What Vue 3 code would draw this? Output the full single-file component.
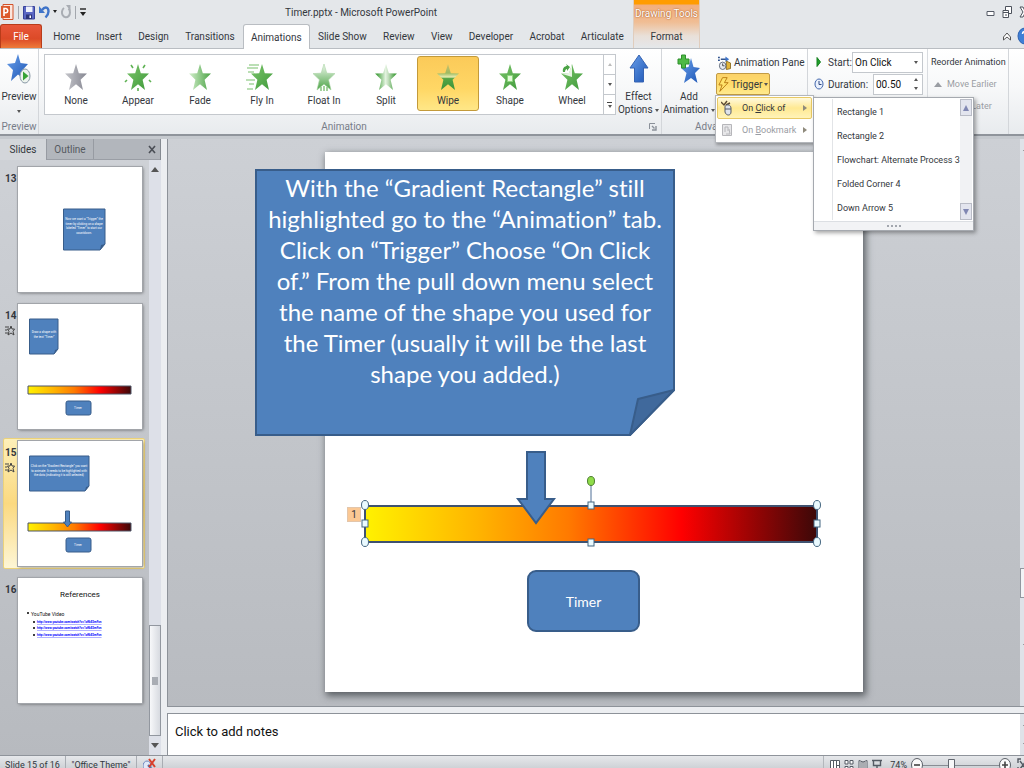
<script setup>
import { ref } from "vue";

const tabs = [
  "Home",
  "Insert",
  "Design",
  "Transitions",
  "Animations",
  "Slide Show",
  "Review",
  "View",
  "Developer",
  "Acrobat",
  "Articulate",
];
const activeTab = ref("Animations");

const effects = [
  { name: "None", fill: "url(#star-grey)" },
  { name: "Appear", fill: "url(#star-green)" },
  { name: "Fade", fill: "url(#star-fade)" },
  { name: "Fly In", fill: "url(#star-green)" },
  { name: "Float In", fill: "url(#star-float)" },
  { name: "Split", fill: "url(#star-split)" },
  { name: "Wipe", fill: "url(#star-wipe)" },
  { name: "Shape", fill: "url(#star-green)" },
  { name: "Wheel", fill: "url(#star-green)" },
];
const effect = ref("Wipe");

const shapes = [
  "Rectangle 1",
  "Rectangle 2",
  "Flowchart: Alternate Process 3",
  "Folded Corner 4",
  "Down Arrow 5",
];

const slides = [
  { number: 13, animated: false },
  { number: 14, animated: true },
  { number: 15, animated: true },
  { number: 16, animated: false },
];
const current = ref(15);

const start = ref("On Click");
const duration = ref("00.50");
const notes = ref("Click to add notes");
const zoom = ref(74);

const star =
  "M12 1 14.8 10.2 23 10.6 16.6 16.8 19 27 12 21.2 5 27 7.4 16.8 1 10.6 9.2 10.2Z";
</script>

<template>
  <div class="app">
    <!-- shared gradients -->
    <svg class="defs" aria-hidden="true">
      <defs>
        <linearGradient id="star-grey">
          <stop offset="0" stop-color="#c4c5ca" />
          <stop offset="1" stop-color="#868792" />
        </linearGradient>
        <linearGradient id="star-green" x2="1" y2="1">
          <stop offset="0" stop-color="#7cc56c" />
          <stop offset="1" stop-color="#3f9a3a" />
        </linearGradient>
        <linearGradient id="star-fade">
          <stop offset="0" stop-color="#d3efcc" />
          <stop offset="1" stop-color="#4ba345" />
        </linearGradient>
        <linearGradient id="star-float" x2="0" y2="1">
          <stop offset="0" stop-color="#f0f9ee" />
          <stop offset="1" stop-color="#4ba345" />
        </linearGradient>
        <linearGradient id="star-split">
          <stop offset="0.1" stop-color="#4ba345" />
          <stop offset="0.48" stop-color="#e3f3df" />
          <stop offset="0.6" stop-color="#c4dfbf" />
          <stop offset="0.9" stop-color="#4ba345" />
        </linearGradient>
        <linearGradient id="star-wipe" x2="0" y2="1">
          <stop offset="0" stop-color="#d2c069" />
          <stop offset="0.35" stop-color="#9cba62" />
          <stop offset="0.5" stop-color="#e6ecae" />
          <stop offset="0.56" stop-color="#55a545" />
          <stop offset="1" stop-color="#3a9338" />
        </linearGradient>
        <linearGradient id="blue-fill" x2="1" y2="1">
          <stop offset="0" stop-color="#6ba0ea" />
          <stop offset="1" stop-color="#1c55b5" />
        </linearGradient>
        <linearGradient id="heat">
          <stop offset="0" stop-color="#fff200" />
          <stop offset="0.25" stop-color="#ffb400" />
          <stop offset="0.45" stop-color="#ff7a00" />
          <stop offset="0.7" stop-color="#ff0000" />
          <stop offset="1" stop-color="#3c0808" />
        </linearGradient>
      </defs>
    </svg>

    <header class="titlebar">
      <div class="quick">
        <svg width="13" height="18" viewBox="0 0 13 18">
          <path d="M2 1.500H12V16.500H2Z" fill="#fbe5dc" stroke="#d2522a" />
          <path d="M0 3H9V15H0Z" fill="#dc5a2d" />
          <path d="M3 13V5.500H5A2.200 2.200 0 0 1 5 9.800H3" fill="none" stroke="#fff" stroke-width="1.600" />
        </svg>
        <i class="bar"></i>
        <button aria-label="Save">
          <svg width="12" height="15" viewBox="0 0 12 15">
            <path d="M.5 1.500H11.500V14H.5Z" fill="#5a67c4" stroke="#38429a" />
            <path d="M3 1.500H9.500V7H3Z" fill="#eef1fb" />
            <path d="M3 9.500H9V14H3Z" fill="#2c3478" />
            <path d="M6.500 10.500H8V13H6.500Z" fill="#fff" />
          </svg>
        </button>
        <button aria-label="Undo">
          <svg width="18" height="14" viewBox="0 0 18 14">
            <path d="M3 5C6 1 9.500 2 9.500 6.500 9.500 9 8 11 6.500 12.500" fill="none" stroke="#3f74c9" stroke-width="2.400" />
            <path d="M0 1V8H6Z" fill="#3f74c9" />
            <path d="M14 5H18L16 8Z" fill="#222" />
          </svg>
        </button>
        <button aria-label="Repeat">
          <svg width="10" height="14" viewBox="0 0 10 14">
            <path d="M3 3A4 5 0 1 0 7.500 3.500" fill="none" stroke="#a9adb3" stroke-width="2" />
            <path d="M5 0H9.500V6Z" fill="#a9adb3" />
          </svg>
        </button>
        <i class="bar"></i>
        <button aria-label="Customize">
          <svg width="6" height="8" viewBox="0 0 6 8">
            <path d="M0 1H6" stroke="#222" stroke-width="1.400" />
            <path d="M0 4H6L3 8Z" fill="#222" />
          </svg>
        </button>
      </div>
      <h1>Timer.pptx - Microsoft PowerPoint</h1>
      <div class="window-buttons">
        <button aria-label="Minimize">
          <svg width="9" height="14" viewBox="0 0 9 14"><path d="M1 6.500H8V10.500H1Z" fill="#fff" stroke="#555b66" /></svg>
        </button>
        <button aria-label="Restore">
          <svg width="10" height="14" viewBox="0 0 10 14">
            <path d="M3.500 1.500H9.500V8.500H3.500Z" fill="#fff" stroke="#4c525c" />
            <path d="M1 5.500H6.500V12.500H1Z" fill="#fff" stroke="#4c525c" />
            <path d="M1 7.500H6.500M3 10H5" stroke="#4c525c" />
          </svg>
        </button>
        <button aria-label="Close">
          <svg width="10" height="14" viewBox="0 0 10 14">
            <path d="M1 2H4L5.500 5 7 2H10L7 7 10 12H7L5.500 9 4 12H1L4 7Z" fill="#fff" stroke="#4c525c" />
          </svg>
        </button>
      </div>
    </header>

    <nav class="tabs">
      <button class="file">File</button>
      <div class="tab-list">
        <button
          v-for="tab in tabs"
          :key="tab"
          class="tab"
          :class="{ active: tab === activeTab }"
          @click="activeTab = tab"
        >
          {{ tab }}
        </button>
      </div>
      <div class="context">
        <span>Drawing Tools</span>
        <button>Format</button>
      </div>
      <div class="help">
        <svg width="8" height="9" viewBox="0 0 8 9"><path d="M.5 8V5L4 1 7.500 5V8L4 5Z" fill="#fff" stroke="#555" /></svg>
        <svg width="16" height="18" viewBox="0 0 16 18">
          <ellipse cx="8" cy="9" rx="7" ry="8" fill="#3f7fd6" stroke="#2f62b0" />
          <path d="M5.500 7C5.500 3.500 10.500 3.500 10.500 6.500 10.500 8.500 8 8.500 8 11M8 12.500V14" fill="none" stroke="#fff" stroke-width="1.600" />
        </svg>
      </div>
    </nav>

    <section class="ribbon">
      <div class="group preview">
        <div class="content">
          <button class="big">
            <svg width="24" height="30" viewBox="0 0 24 30">
              <path d="M11 0 13.500 9 21 10 15.500 16 18 26 11 20.500 4 27 6 16 0 10 8 9Z" fill="url(#blue-fill)" />
              <ellipse cx="18" cy="22" rx="5" ry="7" fill="#eef3ee" stroke="#8798a5" />
              <path d="M16 17.500V26.500L21.500 22Z" fill="#37a336" />
            </svg>
            <span>Preview</span>
            <i class="caret"></i>
          </button>
        </div>
        <footer>Preview</footer>
      </div>

      <div class="group animation">
        <div class="content">
          <div class="gallery">
            <button
              v-for="item in effects"
              :key="item.name"
              class="effect"
              :class="{ selected: item.name === effect }"
              @click="effect = item.name"
            >
              <svg width="32" height="28" viewBox="-4 0 32 28">
                <path :d="star" :fill="item.fill" />
                <g v-if="item.name === 'Appear'" stroke="#5fb254" stroke-width="1.600">
                  <path d="M5 2 7 5M19 2 17 5M1 17-1 19M23 17 25 19M12 25V28" />
                </g>
                <g v-if="item.name === 'Fly In'" stroke="#79bf6d" stroke-width="1.200">
                  <path d="M-1 2H9M-3 5H8M-2 9H4M-4 17H5M-1 21H4M-3 26H3" />
                </g>
                <path v-if="item.name === 'Float In'" :d="star" fill="none" stroke="#a8d3a2" stroke-width=".6" />
                <path v-if="item.name === 'Float In'" d="M9 24V28M12 23V28M15 24V28" stroke="#86c47d" stroke-width="1.500" />
                <path v-if="item.name === 'Shape'" d="M9.500 12.500H14.500V18.500H9.500Z" fill="#e2fbd9" stroke="#8fd67f" />
                <g v-if="item.name === 'Wheel'">
                  <path d="M12 1V14L1 10.500 9 10Z" fill="#e7f5e3" />
                  <path d="M3 9C2 5 5 3 7 3L6 1 10 4 7 8V6C6 6 5 7 5 9Z" fill="#4ba345" />
                </g>
              </svg>
              <span>{{ item.name }}</span>
            </button>
            <div class="gallery-scroll">
              <button disabled aria-label="Row up"><i class="caret up"></i></button>
              <button aria-label="Row down"><i class="caret"></i></button>
              <button aria-label="More"><i class="more"></i><i class="caret"></i></button>
            </div>
          </div>
          <button class="big options">
            <svg width="20" height="30" viewBox="0 0 20 30">
              <path d="M10 1 19 14H14.500V28H5.500V14H1Z" fill="url(#blue-fill)" stroke="#3563b2" />
            </svg>
            <span>Effect<br />Options <i class="caret"></i></span>
          </button>
        </div>
        <footer>
          Animation
          <svg class="launcher" width="8" height="8" viewBox="0 0 8 8">
            <path d="M.5 6V.5H6" fill="none" stroke="#8a9099" />
            <path d="M3 3 5.500 5.500M7 3V7H3" fill="none" stroke="#8a9099" stroke-width="1.400" />
          </svg>
        </footer>
      </div>

      <div class="group advanced">
        <div class="content">
          <button class="big">
            <svg width="24" height="30" viewBox="0 0 24 30">
              <path d="M14 4 16.500 13 23 14 18 19 20.500 29 14 24 7 29 9.500 19 4 14 11.500 13Z" fill="url(#blue-fill)" />
              <path d="M4.500 1H8.500V5H12V10H8.500V14H4.500V10H1V5H4.500Z" fill="#4fba45" stroke="#2f8f2d" />
            </svg>
            <span>Add<br />Animation <i class="caret"></i></span>
          </button>
          <div class="stack">
            <button class="small">
              <svg width="13" height="16" viewBox="0 0 14 16">
                <path d="M0 2H2M0 5H2M3 4H9" stroke="#33558f" stroke-width="1.500" />
                <path d="M8 1 12 4 8 7Z" fill="#3d73c8" />
                <path d="M9 6 13.500 8V14L9 15Z" fill="#e3b53a" stroke="#8d6d20" />
                <ellipse cx="5" cy="11" rx="3.500" ry="4" fill="#e7eaf1" stroke="#60697a" />
                <path d="M5 8.500V11H7" fill="none" stroke="#444" />
              </svg>
              Animation Pane
            </button>
            <div class="trigger">
              <button class="small on">
                <svg width="11" height="17" viewBox="0 0 12 17">
                  <path d="M5 1H10L7 6.500H11L2 16 4.500 9H1Z" fill="#ffe36b" stroke="#b87a12" />
                </svg>
                Trigger <i class="caret"></i>
              </button>
              <div class="menu">
                <button class="menu-row hot">
                  <svg width="12" height="16" viewBox="0 0 12 16">
                    <path d="M0 2 3 5 6 1M5 5 9 3" fill="none" stroke="#5c4a33" stroke-width="1.400" />
                    <path d="M4 7C4 4 10 4 10 8V12C10 16 5 16 4 12Z" fill="#dfe3ea" stroke="#545a66" />
                    <path d="M4 9H10" stroke="#545a66" />
                  </svg>
                  <span>On <u>C</u>lick of</span>
                  <i class="side"></i>
                </button>
                <button class="menu-row" disabled>
                  <svg width="12" height="14" viewBox="0 0 12 14">
                    <path d="M1.500 1.500H10.500V12.500H1.500Z" fill="#e7e7e9" stroke="#b6b6ba" />
                    <path d="M4 9V4H7V8M5 11H9M8 6 9 11" fill="none" stroke="#b6b6ba" />
                  </svg>
                  <span>On <u>B</u>ookmark</span>
                  <i class="side"></i>
                </button>
                <div class="submenu">
                  <div class="submenu-body">
                    <div class="shape-list">
                      <button v-for="shape in shapes" :key="shape">{{ shape }}</button>
                    </div>
                    <div class="menu-scroll">
                      <button aria-label="Scroll up"><i class="caret up"></i></button>
                      <button aria-label="Scroll down"><i class="caret"></i></button>
                    </div>
                  </div>
                  <div class="grip"><i></i><i></i><i></i><i></i></div>
                </div>
              </div>
            </div>
          </div>
        </div>
        <footer>Advanced</footer>
      </div>

      <div class="group timing">
        <div class="content">
          <div class="fields">
            <svg width="10" height="12" viewBox="0 0 10 12"><path d="M3 1.500V10.500L6.500 6Z" fill="#1fa02b" stroke="#15801f" /></svg>
            <label for="start">Start:</label>
            <div class="field">
              <select id="start" v-model="start">
                <option>On Click</option>
                <option>With Previous</option>
                <option>After Previous</option>
              </select>
              <i class="caret"></i>
            </div>
            <svg width="10" height="12" viewBox="0 0 10 12">
              <ellipse cx="5" cy="6" rx="4" ry="5" fill="#eaf1fd" stroke="#4266ac" />
              <path d="M5 3V6.500H7.500" fill="none" stroke="#2d4780" />
            </svg>
            <label for="duration">Duration:</label>
            <div class="field spin">
              <input id="duration" v-model="duration" type="text" />
              <div><i class="caret up"></i><i class="caret"></i></div>
            </div>
          </div>
          <div class="reorder">
            <strong>Reorder Animation</strong>
            <button disabled><i class="caret up"></i>Move Earlier</button>
            <button disabled><i class="caret"></i>Move Later</button>
          </div>
        </div>
      </div>
    </section>

    <main class="body">
      <aside class="panel">
        <div class="panel-tabs">
          <button class="active">Slides</button>
          <button>Outline</button>
          <button class="close" aria-label="Close pane">
            <svg width="8" height="9" viewBox="0 0 8 9"><path d="M1 1 7 8M7 1 1 8" stroke="#4b4f56" stroke-width="1.600" /></svg>
          </button>
        </div>
        <div class="panel-body">
          <ol class="slides">
            <li
              v-for="slide in slides"
              :key="slide.number"
              :class="{ selected: slide.number === current }"
              @click="current = slide.number"
            >
              <div class="number">
                {{ slide.number }}
                <svg v-if="slide.animated" width="10" height="11" viewBox="0 0 10 11">
                  <path d="M6 1 7 4H9.500L8 6.500 9 10 6 8 3 10 4 6.500 2.500 4H5Z" fill="none" stroke="#444" />
                  <path d="M0 2H4M0 5H2M0 8H3" stroke="#444" />
                </svg>
              </div>
              <svg class="thumb" viewBox="0 0 124 125">
                <g v-if="slide.number === 13">
                  <path d="M45.500 42H87V77L82 83H45.500Z" fill="#4f81bd" stroke="#385d8a" />
                  <path d="M87 77 83 78 82 83Z" fill="#385d8a" />
                  <text class="tiny" x="66" y="53">Now we want a “Trigger” the</text>
                  <text class="tiny" x="66" y="58">timer by clicking on a shape</text>
                  <text class="tiny" x="66" y="62">labeled “Timer” to start our</text>
                  <text class="tiny" x="66" y="67">countdown.</text>
                </g>
                <g v-if="slide.number === 14">
                  <path d="M11.500 15H40V45L36 50H11.500Z" fill="#4f81bd" stroke="#385d8a" />
                  <path d="M40 45 37 46 36 50Z" fill="#385d8a" />
                  <text class="tiny" x="26" y="29">Draw a shape with</text>
                  <text class="tiny" x="26" y="34">the text “Timer”</text>
                </g>
                <g v-if="slide.number === 15">
                  <path d="M11.500 15H71V45L67 50H11.500Z" fill="#4f81bd" stroke="#385d8a" />
                  <path d="M71 45 68 46 67 50Z" fill="#385d8a" />
                  <text class="tiny" x="41" y="26">Click on the “Gradient Rectangle” you want</text>
                  <text class="tiny" x="41" y="31">to animate. It needs to be highlighted with</text>
                  <text class="tiny" x="41" y="35">the dots (indicating it is still selected)</text>
                </g>
                <g v-if="slide.animated">
                  <path d="M10 82H113V90H10Z" fill="url(#heat)" stroke="#4c5566" />
                  <rect x="48" y="97" width="25" height="14" rx="2" fill="#4f81bd" stroke="#385d8a" />
                  <text class="tiny" x="60" y="105">Timer</text>
                </g>
                <path
                  v-if="slide.number === 15"
                  d="M47.500 70H51.500V81H53.500L49.500 86 45.500 81H47.500Z"
                  fill="#4f81bd"
                  stroke="#385d8a"
                />
                <g v-if="slide.number === 16">
                  <text class="heading" x="62" y="19">References</text>
                  <circle cx="10" cy="35" r="1" />
                  <text class="item" x="13" y="38">YouTube Video</text>
                  <g v-for="y in [45, 51, 58]" :key="y">
                    <circle cx="16" :cy="y - 1" r="1" />
                    <text class="link" x="19" :y="y">http://www.youtube.com/watch?v=1zKkE3mFcn</text>
                  </g>
                </g>
              </svg>
            </li>
          </ol>
          <div class="panel-scroll">
            <i class="caret up"></i>
            <div class="handle"><i></i></div>
            <i class="caret"></i>
          </div>
        </div>
      </aside>

      <section class="work">
        <div class="stage">
          <div class="canvas">
            <article class="slide">
              <svg class="drawing" viewBox="0 0 538 540">
                <path d="M40 354H492V390H40Z" fill="url(#heat)" stroke="#3f5270" stroke-width="2" />
                <path d="M202 300H220V347H229L211 371 193 347H202Z" fill="#4f81bd" stroke="#385d8a" stroke-width="2" />
                <rect x="203" y="419" width="111" height="60" rx="8" fill="#4f81bd" stroke="#385d8a" stroke-width="2" />
                <path d="M266 333V350" stroke="#4f6f96" />
                <ellipse cx="266" cy="329" rx="3.500" ry="4.500" fill="#8fdc4a" stroke="#4f7d33" />
                <g fill="#eafaff" stroke="#456781">
                  <ellipse v-for="[x, y] in [[40, 353], [492, 353], [40, 390], [492, 390]]" :key="`${x}-${y}`" :cx="x" :cy="y" rx="3.500" ry="4.500" />
                  <rect v-for="[x, y] in [[266, 353], [266, 390], [40, 371], [492, 371]]" :key="`${x}-${y}`" :x="x - 3" :y="y - 3" width="6" height="7" />
                </g>
              </svg>
              <div class="callout">
                <svg viewBox="0 0 420 267">
                  <path d="M1 1H419V221L375 266H1Z" fill="#4f81bd" stroke="#385d8a" stroke-width="2" />
                  <path d="M419 221 383 230 375 266Z" fill="#40699c" stroke="#385d8a" stroke-width="2" stroke-linejoin="round" />
                </svg>
                <p>
                  With the “Gradient Rectangle” still<br />
                  highlighted go to the “Animation” tab.<br />
                  Click on “Trigger” Choose “On Click<br />
                  of.” From the pull down menu select<br />
                  the name of the shape you used for<br />
                  the Timer (usually it will be the last<br />
                  shape you added.)
                </p>
              </div>
              <span class="timer">Timer</span>
              <span class="order">1</span>
            </article>
          </div>
          <div class="stage-scroll">
            <i class="caret up"></i>
            <div class="handle"></div>
            <i class="caret"></i>
          </div>
        </div>
        <div class="notes">
          <textarea v-model="notes" aria-label="Notes"></textarea>
          <div class="notes-scroll"><i class="caret up"></i><i class="caret"></i></div>
        </div>
      </section>
    </main>

    <footer class="status">
      <span class="cell count">Slide 15 of 16</span>
      <span class="cell theme">"Office Theme"</span>
      <span class="cell">
        <svg width="13" height="14" viewBox="0 0 13 14">
          <ellipse cx="4" cy="8" rx="4" ry="5" fill="#dfe8f8" stroke="#6d86bd" />
          <path d="M5 7 11 14" stroke="#5570ad" stroke-width="2" />
          <path d="M6 1 12 9M12 1 6 9" stroke="#d9402c" stroke-width="2" />
        </svg>
      </span>
      <div class="views">
        <svg width="10" height="12" viewBox="0 0 10 12"><path d="M.5 1.500H9.500V11H.5ZM3.500 1V11M6 6.500H9.500M6.500 1V11" fill="#fff" stroke="#555b64" /></svg>
        <svg width="10" height="12" viewBox="0 0 10 12"><path d="M1 1.500H4V5H1ZM6 1.500H9V5H6ZM1 7.500H4V11H1ZM6 7.500H9V11H6Z" fill="#fff" stroke="#555b64" /></svg>
        <svg width="10" height="12" viewBox="0 0 10 12"><path d="M1 1.500 5 3 9 1.500V10L5 11.500 1 10ZM5 3V11.500M3 3V10M7 3V10" fill="#fff" stroke="#555b64" /></svg>
        <svg width="10" height="12" viewBox="0 0 10 12"><path d="M0 1.500H10M1.500 2V6.500H8.500V2M5 6.500V9M2 10.500H8" fill="none" stroke="#555b64" stroke-width="1.400" /></svg>
      </div>
      <label for="zoom">{{ zoom }}%</label>
      <button aria-label="Zoom out">
        <svg width="12" height="14" viewBox="0 0 12 14"><ellipse cx="6" cy="7" rx="5.500" ry="6.500" fill="#fafafa" stroke="#5b6068" /><path d="M3 7H9" stroke="#444" stroke-width="1.600" /></svg>
      </button>
      <input id="zoom" v-model="zoom" type="range" min="10" max="190" />
      <button aria-label="Zoom in">
        <svg width="12" height="14" viewBox="0 0 12 14"><ellipse cx="6" cy="7" rx="5.500" ry="6.500" fill="#fafafa" stroke="#5b6068" /><path d="M3 7H9M6 3.500V10.500" stroke="#444" stroke-width="1.600" /></svg>
      </button>
      <button class="fit" aria-label="Fit slide">
        <svg width="12" height="14" viewBox="0 0 12 14"><path d="M1 5V1H4M8 1H11V5M11 9V13H8M4 13H1V9M3 3 9 11M9 3 3 11" fill="none" stroke="#555b64" stroke-width="1.400" /></svg>
      </button>
    </footer>
  </div>
</template>

<style>
body {
  overflow: hidden;
}
</style>

<style scoped>
* {
  box-sizing: border-box;
}
.app {
  display: flex;
  flex-direction: column;
  width: calc(100vw + 12px);
  height: calc(100vh + 6px);
  font-family: Roboto, sans-serif;
  font-size: 10px;
  line-height: 13px;
  color: #33373d;
  background: #e4e7ea;
}
.defs {
  position: absolute;
  width: 0;
  height: 0;
}
svg {
  display: block;
  flex: none;
}
button {
  padding: 0;
  border: 0;
  background: none;
  font: inherit;
  color: inherit;
  white-space: nowrap;
}
button:disabled {
  color: #9a9da3;
}
.caret {
  display: inline-block;
  flex: none;
  border: 2px solid transparent;
  border-top: 3px solid #555;
  border-bottom: 0;
  vertical-align: middle;
}
.caret.up {
  border-top: 0;
  border-bottom: 3px solid #555;
}

/* title bar */
.titlebar {
  display: grid;
  grid-template-columns: 1fr auto 1fr;
  align-items: center;
  height: 24px;
  padding: 0 7px 0 1px;
  flex: none;
}
.titlebar h1 {
  margin: 0 308px 0 0;
  font-size: 10px;
  font-weight: normal;
  white-space: nowrap;
}
.quick {
  display: flex;
  align-items: center;
  gap: 4px;
}
.bar {
  width: 1px;
  height: 13px;
  background: #a3a7ad;
}
.window-buttons {
  display: flex;
  gap: 7px;
  justify-content: flex-end;
}

/* tabs */
.tabs {
  display: flex;
  height: 25px;
  flex: none;
  border-bottom: 1px solid #b9bdc2;
}
.file {
  width: 42px;
  border-radius: 3px 3px 0 0;
  border: 1px solid #b83c1a;
  border-bottom: 0;
  background: linear-gradient(#e8573a, #dc4a27 60%, #ee7b3a);
  color: #fff;
}
.tab-list {
  display: flex;
  width: 591px;
  padding: 0 1px 0 3px;
}
.tab {
  flex: auto;
  border: 1px solid transparent;
  border-bottom: 0;
}
.tab.active {
  margin-bottom: -1px;
  border-color: #b9bdc2;
  border-radius: 3px 3px 0 0;
  background: #fff;
}
.context {
  display: flex;
  flex-direction: column;
  align-items: center;
  width: 67px;
  height: 48px;
  margin-top: -24px;
  border: solid #e0cdbd;
  border-width: 0 1px;
  background: linear-gradient(#ff9c00 4px, #f2ae7c 5px, #f0bd94 22px, #e9e0d9 36px, #e4e7ea);
}
.context span {
  padding-top: 7px;
  color: #fff;
  text-shadow: 0 0 1px #b0602a, 0 0 2px #b0602a;
  white-space: nowrap;
  height: 24px;
}
.context button {
  flex: 1;
}
.help {
  display: flex;
  align-items: center;
  gap: 6px;
  margin-left: auto;
  margin-right: 3px;
}

/* ribbon */
.ribbon {
  display: flex;
  flex: none;
  height: 87px;
  border-bottom: 2px solid #8f949b;
  background: linear-gradient(#fff, #f7f8f9 45%, #e8ebee);
}
.group {
  display: flex;
  flex: none;
  flex-direction: column;
  border-right: 1px solid #d3d6da;
}
.group .content {
  display: flex;
  flex: 1;
  min-height: 0;
}
.group > footer {
  position: relative;
  height: 15px;
  line-height: 15px;
  text-align: center;
  color: #777c88;
}
.preview {
  width: 39px;
}
.animation {
  width: 623px;
}
.animation > footer {
  padding-right: 12px;
}
.advanced {
  width: 146px;
}
.advanced > footer {
  padding-left: 33px;
  text-align: left;
}
.timing {
  width: 201px;
}
.big {
  display: flex;
  flex-direction: column;
  align-items: center;
  flex: 1;
  gap: 6px;
  padding-top: 5px;
}
.big .caret {
  margin-top: 1px;
}
.big span .caret {
  margin-top: 0;
}
.gallery {
  display: flex;
  flex: none;
  width: 572px;
  height: 61px;
  margin: 5px 0 0 5px;
  border: 1px solid #c4c8cd;
  background: #fff;
}
.effect {
  display: flex;
  flex-direction: column;
  align-items: center;
  width: 62px;
  gap: 3px;
  margin: 1px 0 3px;
  padding-top: 6px;
  border: 1px solid transparent;
  border-radius: 3px;
}
.effect.selected {
  border-color: #c39a3a;
  background: linear-gradient(#fbca59, #ffd765 60%, #ffe787);
}
.gallery-scroll {
  display: flex;
  flex-direction: column;
  width: 12px;
  border-left: 1px solid #c4c8cd;
}
.gallery-scroll button {
  display: flex;
  flex-direction: column;
  align-items: center;
  justify-content: center;
  gap: 2px;
  flex: 1;
}
.gallery-scroll button + button {
  border-top: 1px solid #c4c8cd;
}
.gallery-scroll button:disabled {
  opacity: 0.4;
}
.more {
  width: 5px;
  height: 1px;
  background: #444;
}
.launcher {
  position: absolute;
  right: 4px;
  top: 4px;
}
.advanced .big {
  flex: none;
  width: 54px;
}
.stack {
  padding-top: 3px;
}
.small {
  display: flex;
  align-items: center;
  gap: 3px;
  height: 21px;
  padding: 0 2px;
}
.small.on {
  height: 22px;
  padding: 0 1px;
  gap: 2px;
  border: 1px solid #c29b45;
  border-radius: 2px;
  background: linear-gradient(#fbd26a, #ffdc6b 50%, #ffea8e);
}
.trigger {
  position: relative;
}

/* trigger menu */
.menu {
  position: absolute;
  z-index: 5;
  top: 22px;
  left: -1px;
  width: 99px;
  padding: 1px;
  border: 1px solid #b3b6bb;
  background: #fff;
  box-shadow: 1px 2px 3px rgba(0, 0, 0, 0.3);
}
.menu-row {
  display: flex;
  align-items: center;
  width: 100%;
  height: 22px;
  padding: 0 4px 0 3px;
  border: 1px solid transparent;
  font-size: 9px;
}
.menu-row.hot {
  border-color: #e8c964;
  border-radius: 2px;
  background: linear-gradient(#fff9dd, #ffe992 50%, #fff3b8);
}
.menu-row span {
  margin-left: 9px;
}
.side {
  margin-left: auto;
  border: 3px solid transparent;
  border-left: 4px solid #8f8a7c;
  border-right: 0;
}
.submenu {
  position: absolute;
  top: 1px;
  left: 97px;
  width: 161px;
  border: 1px solid #a5a9af;
  background: #fff;
  box-shadow: 2px 2px 4px rgba(0, 0, 0, 0.35);
}
.submenu-body {
  display: flex;
  padding: 1px 1px 1px 0;
}
.shape-list {
  display: flex;
  flex-direction: column;
  flex: 1;
  min-width: 0;
  margin-left: 18px;
  padding: 1px 0 0 4px;
  border-left: 1px solid #e2e4e7;
}
.shape-list button {
  height: 24px;
  font-size: 9px;
  text-align: left;
}
.menu-scroll {
  display: flex;
  flex: none;
  flex-direction: column;
  justify-content: space-between;
  width: 12px;
  background: #f1f2f4;
}
.menu-scroll button {
  display: flex;
  align-items: center;
  justify-content: center;
  height: 17px;
  border: 1px solid #b9bcc6;
  background: #e3e5ee;
}
.menu-scroll .caret {
  border-width: 6px 3px 0;
  border-top-color: #8188b3;
}
.menu-scroll .caret.up {
  border-width: 0 3px 6px;
  border-bottom-color: #8188b3;
}
.grip {
  display: flex;
  justify-content: center;
  align-items: center;
  gap: 2px;
  height: 9px;
  border-top: 1px solid #dcdfe3;
  background: #f2f3f5;
}
.grip i {
  width: 2px;
  height: 2px;
  background: #a3a7ae;
}

/* timing */
.fields {
  display: grid;
  grid-template-columns: 14px 1fr auto;
  grid-template-rows: 22px 22px;
  align-items: center;
  justify-items: start;
  flex: none;
  width: 119px;
  padding: 2px 4px 0 6px;
}
.field {
  display: flex;
  align-items: center;
  justify-self: end;
  width: 71px;
  height: 21px;
  padding-right: 4px;
  border: 1px solid #c4c8cd;
  background: #fff;
}
/* the boxes share the right edge, the label column gives way */
.fields label {
  width: 0;
  white-space: nowrap;
}
.field.spin {
  width: 50px;
}
.field select,
.field input {
  flex: 1;
  min-width: 0;
  padding: 0 2px;
  border: 0;
  outline: 0;
  appearance: none;
  background: none;
  font: inherit;
  color: #111;
}
.spin div {
  display: flex;
  flex-direction: column;
  gap: 6px;
}
.reorder {
  display: flex;
  flex-direction: column;
  align-items: flex-start;
  flex: 1;
  padding: 2px 0 0 3px;
  border-left: 1px solid #d9dce0;
  font-size: 9px;
}
.reorder strong {
  font-weight: normal;
  line-height: 22px;
  white-space: nowrap;
}
.reorder button {
  display: flex;
  align-items: center;
  gap: 5px;
  height: 22px;
  margin-left: 3px;
}
.reorder .caret {
  border-width: 5px 4px 0;
  border-top-color: #9a9da3;
}
.reorder .caret.up {
  border-width: 0 4px 5px;
  border-bottom-color: #9a9da3;
}

/* body */
.body {
  display: flex;
  flex: 1;
  min-height: 0;
  padding-top: 3px;
  background: #c5c9ce;
}
.panel {
  display: flex;
  flex-direction: column;
  flex: none;
  width: 161px;
  border-right: 1px solid #858a91;
  background: linear-gradient(#cfd2d7, #b7babf);
}
.panel-tabs {
  display: flex;
  height: 21px;
  background: #b2b6bc;
  border-bottom: 1px solid #9a9ea5;
}
.panel-tabs button {
  width: 47px;
  border-right: 1px solid #979ba2;
  color: #55595f;
}
.panel-tabs .active {
  margin-bottom: -1px;
  background: #d3d6da;
  color: #33373d;
}
.panel-tabs .close {
  display: flex;
  align-items: center;
  justify-content: center;
  width: 16px;
  margin-left: auto;
  border: 0;
}
.panel-body {
  display: flex;
  flex: 1;
  min-height: 0;
}
.slides {
  flex: 1;
  margin: 0;
  padding: 4px 4px 0 3px;
  list-style: none;
}
.slides li {
  display: flex;
  height: 131px;
  margin-bottom: 6px;
  padding: 2px 2px 3px 1px;
  border: 1px solid transparent;
  border-radius: 2px;
}
.slides .selected {
  border: 1px solid #ecd27a;
  background: linear-gradient(#fdf0b9, #fbd980 50%, #fdf6d6);
}
.number {
  display: flex;
  flex-direction: column;
  gap: 3px;
  width: 13px;
  padding-top: 5px;
  font-weight: bold;
}
.thumb {
  flex: 1;
  height: 125px;
  background: #fff;
  outline: 1px solid #a2a5aa;
  box-shadow: 1px 1px 3px rgba(0, 0, 0, 0.5);
}
.tiny {
  font-size: 3px;
  text-anchor: middle;
  fill: #fff;
}
.heading {
  font-size: 8px;
  text-anchor: middle;
  fill: #111;
}
.item {
  font-size: 5px;
  fill: #111;
}
.link {
  font-size: 3px;
  font-weight: bold;
  fill: #00f;
  text-decoration: underline;
}
.panel-scroll {
  display: flex;
  flex-direction: column;
  align-items: center;
  justify-content: space-between;
  width: 12px;
  padding: 7px 0;
  background: #dde0e8;
}
.panel-scroll .caret {
  border-width: 5px 4px 0;
}
.panel-scroll .caret.up {
  border-width: 0 4px 5px;
}
.panel-scroll .handle {
  display: flex;
  align-items: center;
  justify-content: center;
  width: 12px;
  height: 111px;
  margin-top: auto;
  margin-bottom: 7px;
  border: 1px solid #92979f;
  background: linear-gradient(90deg, #f7f8fa, #d7dae0);
}
.handle i {
  width: 6px;
  height: 8px;
  background: #a9adb4;
}
.work {
  display: flex;
  flex-direction: column;
  flex: 1;
  min-width: 0;
  padding-left: 6px;
  background: #eceef1;
}
.stage {
  display: flex;
  flex: 1;
  min-height: 0;
  border: solid #8d9299;
  border-width: 0 0 1px 1px;
}
.canvas {
  flex: 1;
  padding-top: 13px;
  background: linear-gradient(#cdd0d5, #b8bbc0);
}
.slide {
  position: relative;
  width: 538px;
  height: 540px;
  margin: 0 auto;
  background: #fff;
  box-shadow: 2px 3px 7px 1px rgba(60, 65, 70, 0.75);
}
.drawing {
  position: absolute;
  inset: 0;
}
.callout {
  position: absolute;
  top: 17px;
  left: -70px;
  width: 420px;
}
.callout p {
  position: absolute;
  inset: 3px 0 0;
  margin: 0;
  color: #fff;
  font-family: Lato, sans-serif;
  font-size: 24px;
  font-variant-ligatures: none;
  line-height: 31px;
  text-align: center;
  white-space: nowrap;
}
.timer {
  position: absolute;
  top: 418px;
  left: 202px;
  width: 113px;
  font-family: Lato, sans-serif;
  font-size: 14px;
  line-height: 64px;
  text-align: center;
  color: #fff;
}
.order {
  position: absolute;
  top: 355px;
  left: 22px;
  width: 14px;
  height: 15px;
  border: 1px solid #e3c6ab;
  background: #fbc894;
  text-align: center;
}
.stage-scroll,
.notes-scroll {
  display: flex;
  flex-direction: column;
  align-items: center;
  justify-content: space-between;
  width: 16px;
  padding: 7px 0;
  background: #dfe2e8;
}
.stage-scroll .handle {
  width: 16px;
  height: 30px;
  margin-top: auto;
  margin-bottom: 46px;
  border: 1px solid #92979f;
  background: #f3f4f6;
}
.stage-scroll .caret,
.notes-scroll .caret {
  border-width: 5px 5px 0;
}
.stage-scroll .caret.up,
.notes-scroll .caret.up {
  border-width: 0 5px 5px;
}
.stage-scroll .caret:last-child {
  margin-bottom: 50px;
}
.notes {
  display: flex;
  height: 42px;
  margin-top: 6px;
  border: solid #8d9299;
  border-width: 1px 0 0 1px;
}
.notes textarea {
  flex: 1;
  padding: 9px 7px;
  border: 0;
  outline: 0;
  resize: none;
  background: #fff;
  font-family: inherit;
  font-size: 13px;
  line-height: 18px;
  color: #111;
}

/* status bar */
.status {
  display: flex;
  align-items: center;
  flex: none;
  height: 19px;
  padding-right: 7px;
  border-top: 1px solid #8f949b;
  background: linear-gradient(#e6e8eb, #c3c7cc);
}
.cell {
  display: flex;
  align-items: center;
  justify-content: center;
  height: 100%;
  padding: 0 6px;
  border-right: 1px solid #a9adb3;
  white-space: nowrap;
}
.count,
.theme {
  padding: 0;
  font-size: 9px;
}
.count {
  width: 66px;
}
.theme {
  width: 71px;
}
.views {
  display: flex;
  gap: 4px;
  height: 100%;
  align-items: center;
  margin-left: auto;
  padding-left: 6px;
  border-left: 1px solid #b3b7bc;
}
.status label {
  margin: 0 4px 0 8px;
  font-size: 9px;
}
.fit {
  margin-left: 6px;
}
#zoom {
  width: 76px;
  height: 14px;
  margin: 0;
  appearance: none;
  background: linear-gradient(#888d94, #888d94) center / 100% 1px no-repeat;
}
#zoom::-webkit-slider-thumb {
  appearance: none;
  width: 7px;
  height: 12px;
  border: 1px solid #62676f;
  border-radius: 1px 1px 4px 4px;
  background: #f7f8f9;
}
</style>
